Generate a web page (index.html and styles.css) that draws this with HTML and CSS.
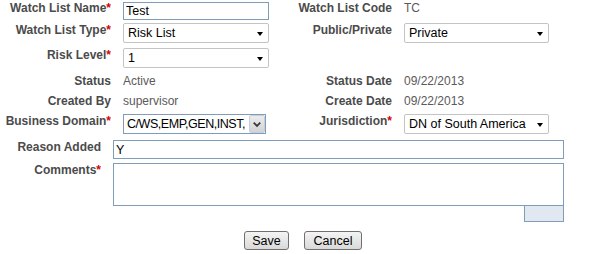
FILE: index.html
```html
<!DOCTYPE html>
<html>
<head>
<meta charset="utf-8">
<link rel="stylesheet" href="styles.css">
</head>
<body>
<form class="form">
  <div class="top">
    <div class="lbl">Watch List Name<span class="req">*</span></div>
    <div><input class="txt txt-name" type="text" value="Test"></div>
    <div class="lbl">Watch List Code</div>
    <div class="val">TC</div>

    <div class="lbl">Watch List Type<span class="req">*</span></div>
    <div class="sel-wrap w146"><select class="sel"><option>Risk List</option></select></div>
    <div class="lbl">Public/Private</div>
    <div class="sel-wrap w145"><select class="sel"><option>Private</option></select></div>

    <div class="lbl">Risk Level<span class="req">*</span></div>
    <div class="sel-wrap w146"><select class="sel"><option>1</option></select></div>
    <div></div>
    <div></div>

    <div class="lbl">Status</div>
    <div class="val">Active</div>
    <div class="lbl">Status Date</div>
    <div class="val">09/22/2013</div>

    <div class="lbl">Created By</div>
    <div class="val">supervisor</div>
    <div class="lbl">Create Date</div>
    <div class="val">09/22/2013</div>

    <div class="lbl">Business Domain<span class="req">*</span></div>
    <div class="bd-wrap">
      <select class="bd-sel"><option>C/WS,EMP,GEN,INST,</option></select>
      <span class="bd-btn"><svg width="15" height="18" viewBox="0 0 15 18"><path d="M4 7.5 L7.5 11 L11 7.5" fill="none" stroke="#3c3c3c" stroke-width="2"/></svg></span>
    </div>
    <div class="lbl">Jurisdiction<span class="req">*</span></div>
    <div class="sel-wrap w145"><select class="sel"><option>DN of South America</option></select></div>
  </div>

  <div class="bottom">
    <div class="lbl">Reason Added</div>
    <div><input class="txt txt-wide" type="text" value="Y"></div>
    <div class="lbl">Comments<span class="req">*</span></div>
    <div>
      <textarea class="ta"></textarea>
      <div class="grip"></div>
    </div>
  </div>

  <div class="actions">
    <button type="button" class="btn btn-save">Save</button>
    <button type="button" class="btn btn-cancel">Cancel</button>
  </div>
</form>
</body>
</html>
```

FILE: styles.css
```css
* { box-sizing: border-box; }

body {
  margin: 0;
  background: #ffffff;
  font-family: "Liberation Sans", Arial, sans-serif;
  font-size: 12px;
  color: #4b4b4b;
}

.form { margin: 0; width: 594px; }

.top {
  display: grid;
  grid-template-columns: 111px 146px 111px 145px;
  grid-template-rows: 22px 25px 26px 20px 20px 20px;
  column-gap: 12px;
  margin-top: 1px;
}

.lbl {
  font-weight: bold;
  text-align: right;
  line-height: 14px;
  color: #4b4b4b;
  white-space: nowrap;
}

.req { color: #d40000; }

.val {
  line-height: 14px;
  color: #5a5a5a;
  white-space: nowrap;
}

.txt {
  display: block;
  margin: 0;
  border: 1px solid #7f9db9;
  background: #fff;
  padding: 0 2px;
  font: 12.5px "Liberation Sans", Arial, sans-serif;
  color: #000;
  outline: none;
}

.txt-name { width: 146px; height: 18px; margin-top: 1px; }
.txt-wide { width: 451px; height: 19px; }

.sel-wrap { position: relative; height: 20px; }
.w146 { width: 146px; }
.w145 { width: 145px; }

.sel {
  -webkit-appearance: none;
  appearance: none;
  display: block;
  width: 100%;
  height: 20px;
  margin: 0;
  border: 1px solid #c4c4c4;
  border-radius: 2px;
  background: #fff;
  padding: 0 16px 0 4px;
  font: 12.5px "Liberation Sans", Arial, sans-serif;
  color: #000;
  outline: none;
}

.sel-wrap::after {
  content: "";
  position: absolute;
  right: 6px;
  top: 9px;
  width: 0;
  height: 0;
  border-left: 3.5px solid transparent;
  border-right: 3.5px solid transparent;
  border-top: 4px solid #000;
  pointer-events: none;
}

.bd-wrap { position: relative; width: 143px; height: 20px; }

.bd-sel {
  -webkit-appearance: none;
  appearance: none;
  display: block;
  width: 100%;
  height: 20px;
  margin: 0;
  border: 1px solid #7f9db9;
  border-radius: 0;
  background: #fff;
  padding: 0 18px 0 3px;
  font: 12.5px "Liberation Sans", Arial, sans-serif;
  letter-spacing: -0.45px;
  color: #000;
  outline: none;
}

.bd-btn {
  position: absolute;
  top: 1px;
  right: 1px;
  width: 16px;
  height: 18px;
  border: 1px solid #c3cfdf;
  border-radius: 2px;
  background: linear-gradient(#ececec, #d3d3d3);
  display: flex;
  align-items: center;
  justify-content: center;
}

.bd-btn svg { display: block; }

.bottom {
  display: grid;
  grid-template-columns: 101px 451px;
  grid-template-rows: 23px auto;
  column-gap: 12px;
  margin-top: 6px;
}

.ta {
  display: block;
  width: 451px;
  height: 43px;
  margin: 0;
  padding: 2px;
  border: 1px solid #7f9db9;
  resize: none;
  font: 12px "Liberation Sans", Arial, sans-serif;
  outline: none;
}

.grip {
  width: 40px;
  height: 16px;
  margin-left: auto;
  background: #e1e8f2;
  border: 1px solid #7f9db9;
  border-top: none;
}

.actions {
  display: flex;
  justify-content: center;
  gap: 15px;
  margin-top: 9px;
  padding-left: 12px;
}

.btn {
  height: 19px;
  margin: 0;
  padding: 0;
  border: 1px solid #707070;
  border-radius: 3px;
  background: linear-gradient(#f4f4f4, #d9d9d9);
  font: 12.5px "Liberation Sans", Arial, sans-serif;
  color: #000;
}

.btn-save { width: 45px; }
.btn-cancel { width: 58px; }
```
